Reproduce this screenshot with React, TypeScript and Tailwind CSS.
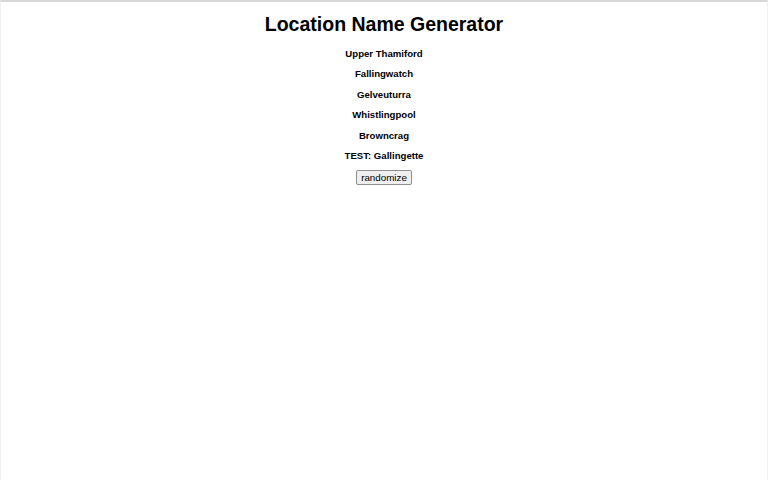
import { useState } from 'react'

const names = ['Upper Thamiford', 'Fallingwatch', 'Gelveuturra', 'Whistlingpool', 'Browncrag']

export default function App() {
  const [list] = useState(names)

  return (
    <div className="h-[480px] w-[768px] border-t-2 border-l border-r border-t-[#d8d8d8] border-l-[#eeeeee] border-r-[#f0f0f0] bg-white text-black font-['Liberation_Sans',Arial,sans-serif]">
      <div className="flex flex-col items-center">
        <h1 className="mt-[10px] text-[19.5px] leading-[24px] font-bold">Location Name Generator</h1>
        <div className="mt-[11px] flex flex-col items-center gap-[7.4px]">
          {list.map((n) => (
            <p key={n} className="text-[9.6px] leading-[13px] font-bold">{n}</p>
          ))}
          <p className="text-[9.6px] leading-[13px] font-bold">TEST: Gallingette</p>
        </div>
        <button className="mt-[8px] h-[15px] px-[4px] text-[9.8px] leading-[13px] bg-[#efefef] border border-[#8f8f8f] rounded-[2px]">
          randomize
        </button>
      </div>
    </div>
  )
}
